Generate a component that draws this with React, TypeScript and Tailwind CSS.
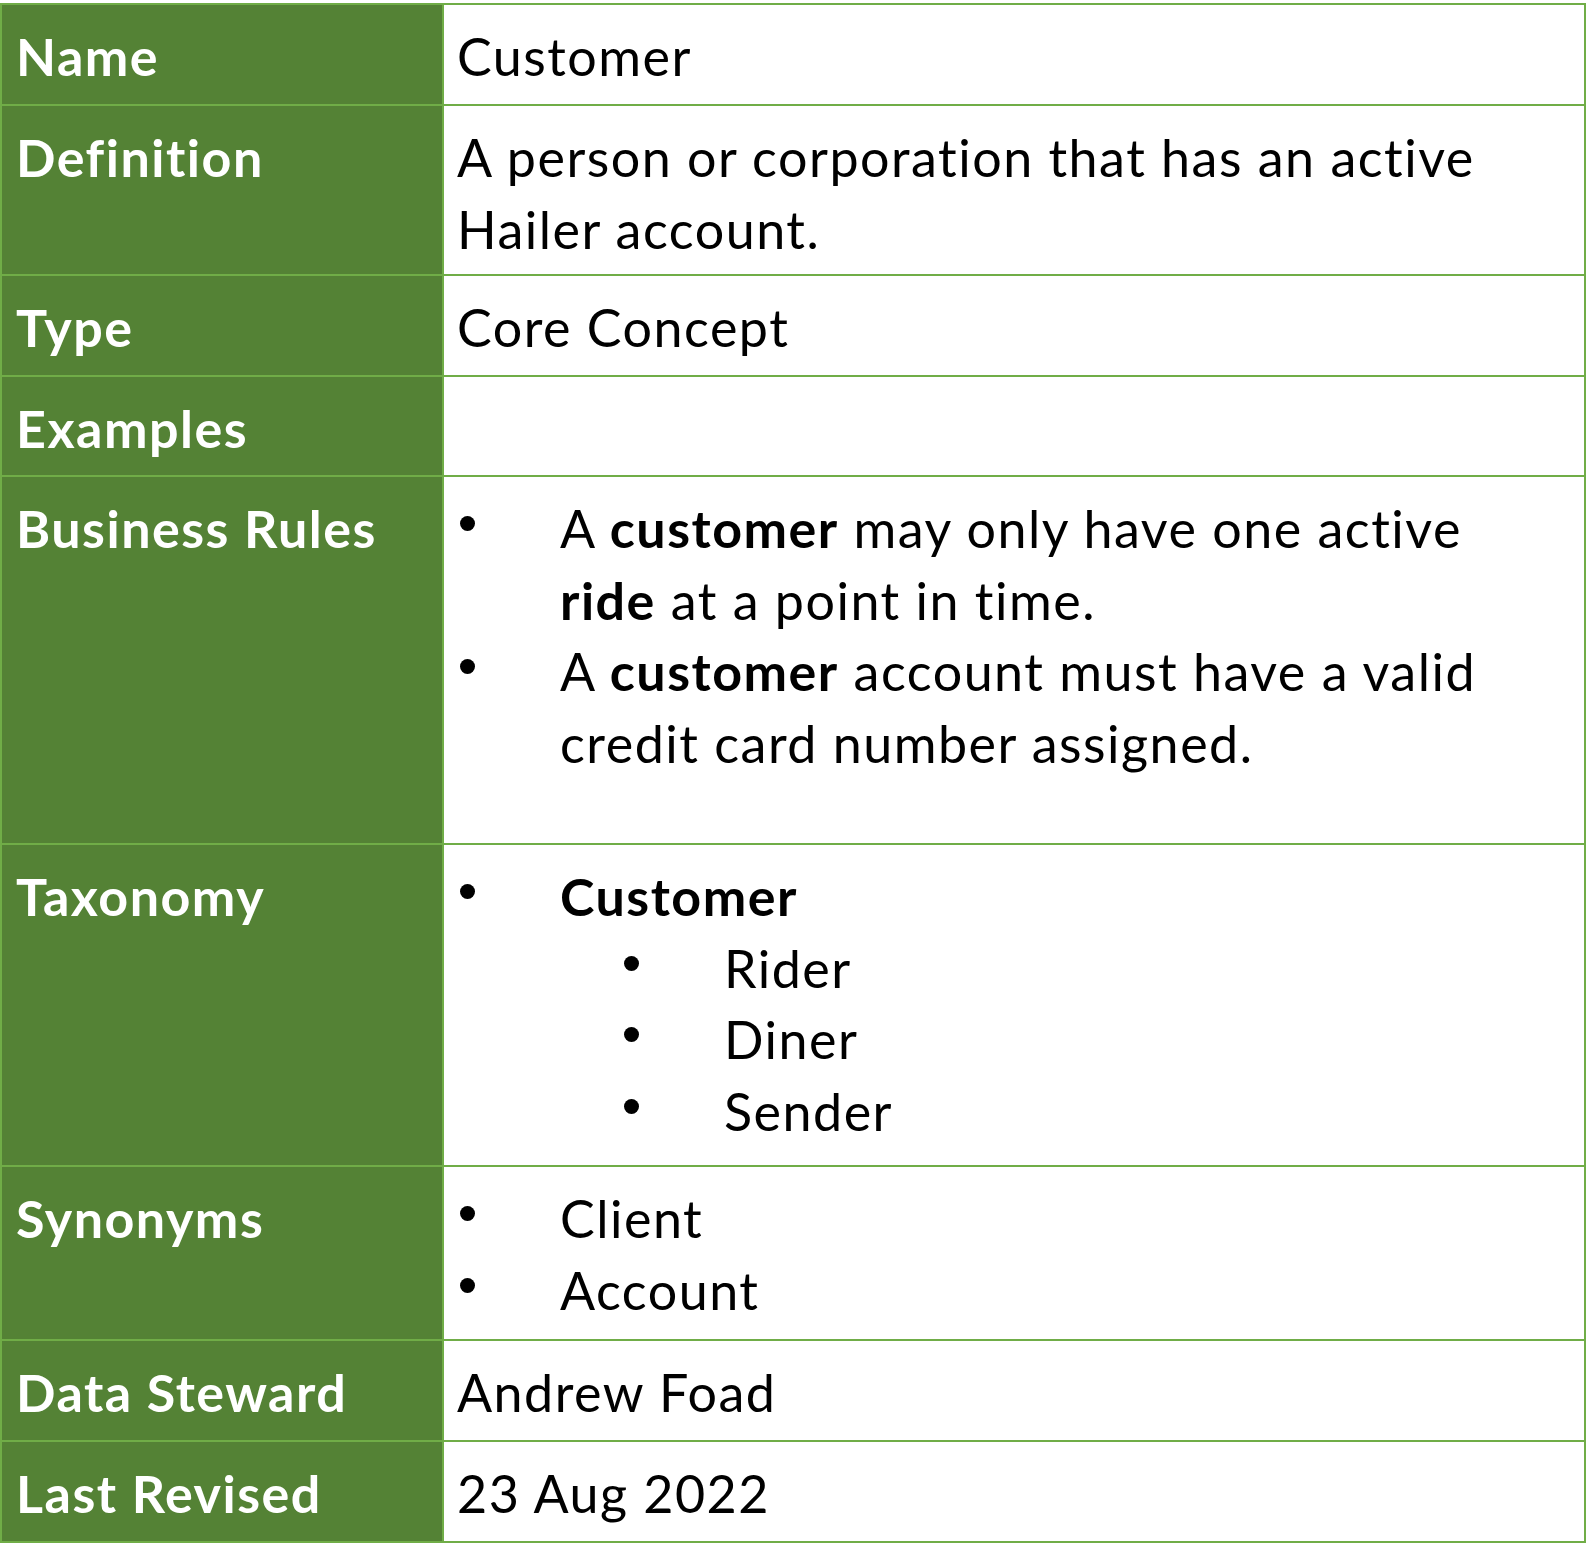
import React from 'react';

type Row = {
    label: string;
    height: string;
    content: React.ReactNode;
};

function Bullet({ children, sub = false }: { children: React.ReactNode; sub?: boolean }) {
    return (
        <div className={`flex ${sub ? 'pl-[169px]' : 'pl-[5px]'}`}>
            <div className="w-[100px] shrink-0">
                <div className="mt-[23px] w-[15px] h-[15px] rounded-full bg-black" />
            </div>
            <div className="whitespace-nowrap">{children}</div>
        </div>
    );
}

const rows: Row[] = [
    { label: 'Name', height: 'h-[101px]', content: <p className="pl-[2px]">Customer</p> },
    {
        label: 'Definition',
        height: 'h-[170px]',
        content: (
            <p className="pl-[2px] whitespace-nowrap">
                A person or corporation that has an active
                <br />
                Hailer account.
            </p>
        ),
    },
    { label: 'Type', height: 'h-[101px]', content: <p className="pl-[2px]">Core Concept</p> },
    { label: 'Examples', height: 'h-[100px]', content: null },
    {
        label: 'Business Rules',
        height: 'h-[368px]',
        content: (
            <div>
                <Bullet>
                    A <b>customer</b> may only have one active
                    <br />
                    <b>ride</b> at a point in time.
                </Bullet>
                <Bullet>
                    A <b>customer</b> account must have a valid
                    <br />
                    credit card number assigned.
                </Bullet>
            </div>
        ),
    },
    {
        label: 'Taxonomy',
        height: 'h-[322px]',
        content: (
            <div>
                <Bullet>
                    <b>Customer</b>
                </Bullet>
                <Bullet sub>Rider</Bullet>
                <Bullet sub>Diner</Bullet>
                <Bullet sub>Sender</Bullet>
            </div>
        ),
    },
    {
        label: 'Synonyms',
        height: 'h-[174px]',
        content: (
            <div>
                <Bullet>Client</Bullet>
                <Bullet>Account</Bullet>
            </div>
        ),
    },
    { label: 'Data Steward', height: 'h-[101px]', content: <p className="pl-[2px]">Andrew Foad</p> },
    { label: 'Last Revised', height: 'h-[101px]', content: <p className="pl-[2px]">23 Aug 2022</p> },
];

export default function App() {
    return (
        <div className="w-[1588px] h-[1564px] bg-white pt-[3px] font-['Lato',sans-serif] text-[52px] leading-[71.5px] tracking-[1.5px] [font-variant-ligatures:none] text-black">
            <div className="w-[1586px] border-t-2 border-l-2 border-[#70ad47]">
                {rows.map((row) => (
                    <div key={row.label} className={`flex border-b-2 border-[#70ad47] ${row.height}`}>
                        <div className="w-[442px] shrink-0 bg-[#548235] border-r-2 border-[#70ad47] pl-[14px] pt-[16px] font-bold text-white whitespace-nowrap">
                            {row.label}
                        </div>
                        <div className="flex-1 border-r-2 border-[#70ad47] pl-[11px] pt-[16px]">{row.content}</div>
                    </div>
                ))}
            </div>
        </div>
    );
}
